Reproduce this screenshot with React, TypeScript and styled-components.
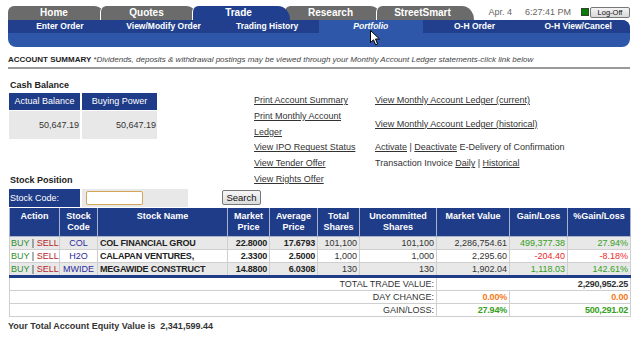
import React from "react";
import styled, { createGlobalStyle } from "styled-components";

const GlobalStyle = createGlobalStyle`
  html, body { margin: 0; padding: 0; background: #fff; }
  body { font-family: "Liberation Sans", Arial, sans-serif; color: #333; }
  * { box-sizing: border-box; }
`;

const NAVY = "#1f3c88";
const CELL_GRAY = "#e8e8e8";

const Page = styled.div`
  width: 640px;
  padding: 6px 10px 0 8px;
`;

const TopBar = styled.div`
  display: flex;
  align-items: flex-end;
  height: 14px;
`;

const Tabs = styled.div`
  display: flex;
  align-items: flex-end;
`;

const Tab = styled.div<{ $active?: boolean }>`
  position: relative;
  z-index: ${(p) => (p.$active ? 2 : 1)};
  width: 98px;
  height: 14px;
  margin-left: -6px;
  padding-right: 6px;
  border-left: 1px solid #fff;
  border-radius: 6px 12px 0 0 / 6px 14px 0 0;
  background: ${(p) => (p.$active ? "#203f8e" : "#6b6b6b")};
  color: #fff;
  font-weight: bold;
  font-size: 10px;
  line-height: 14px;
  text-align: center;
  &:first-child {
    margin-left: 0;
    border-left: 0;
  }
`;

const Clock = styled.div`
  margin-left: auto;
  display: flex;
  align-items: center;
  height: 14px;
  font-size: 9px;
  color: #666;
  padding-bottom: 2px;
`;

const ClockText = styled.span<{ $gap: number }>`
  margin-right: ${(p) => p.$gap}px;
`;

const StatusLight = styled.span`
  display: inline-block;
  width: 8px;
  height: 8px;
  background: #0b7a0b;
  border: 1px solid #2a4a2a;
  margin-right: 1px;
`;

const LogOff = styled.button`
  width: 40px;
  height: 11px;
  padding: 0;
  font-family: "Liberation Sans", Arial, sans-serif;
  font-size: 7.5px;
  line-height: 9px;
  color: #111;
  background: linear-gradient(#f4f4f4, #d8d8d8);
  border: 1px solid #777;
  border-radius: 2px;
`;

const SubNav = styled.div`
  position: relative;
  background: #2f57a9;
  border-radius: 0 8px 8px 8px;
  overflow: hidden;
  height: 27px;
`;

const SubRow = styled.div`
  display: grid;
  grid-template-columns: repeat(6, 1fr);
  height: 13px;
`;

const SubItem = styled.div<{ $active?: boolean }>`
  background: ${(p) => (p.$active ? "#2f57a9" : "#213f8d")};
  color: #fff;
  font-size: 8.5px;
  font-weight: bold;
  font-style: ${(p) => (p.$active ? "italic" : "normal")};
  line-height: 13px;
  text-align: center;
`;

const Cursor = styled.svg`
  position: absolute;
  left: 362px;
  top: 10px;
`;

const SummaryLine = styled.div`
  margin-top: 5px;
  line-height: 10px;
  height: 10px;
  white-space: nowrap;
`;

const SummaryTitle = styled.span`
  font-size: 8px;
  font-weight: bold;
  color: #222;
`;

const SummaryNote = styled.span`
  font-size: 8px;
  font-style: italic;
  color: #444;
`;

const Rule = styled.div`
  margin-top: 5px;
  height: 2px;
  background: #9a9a9a;
`;

const Middle = styled.div`
  display: grid;
  grid-template-columns: 246px 1fr;
`;

const LeftCol = styled.div`
  padding-left: 1px;
`;

const SectionTitle = styled.div<{ $top: number }>`
  margin-top: ${(p) => p.$top}px;
  margin-left: 1px;
  font-size: 9px;
  font-weight: bold;
  line-height: 12px;
  color: #222;
`;

const BalanceGrid = styled.div`
  margin-top: 2px;
  display: grid;
  grid-template-columns: 71px 75px;
  grid-template-rows: 17px 28px;
  column-gap: 2px;
  row-gap: 1px;
`;

const HeadCell = styled.div`
  background: ${NAVY};
  color: #fff;
  font-size: 9px;
  line-height: 17px;
  text-align: center;
`;

const ValueCell = styled.div`
  background: ${CELL_GRAY};
  font-size: 9px;
  line-height: 28px;
  text-align: right;
  padding-right: 1px;
  color: #333;
`;

const LinksGrid = styled.div`
  padding-top: 24px;
  display: grid;
  grid-template-columns: 121px auto;
  grid-template-rows: 15.8px 31.6px 15.8px 15.8px 15.8px;
  align-items: center;
  font-size: 9px;
  line-height: 15.8px;
  color: #333;
  white-space: nowrap;
`;

const Link = styled.a`
  color: #333;
  text-decoration: underline;
  cursor: pointer;
`;

const StockRow = styled.div`
  margin-top: 1px;
  display: flex;
  align-items: center;
  height: 18px;
  padding-left: 1px;
`;

const StockLabel = styled.div`
  width: 71px;
  height: 18px;
  background: ${NAVY};
  color: #fff;
  font-size: 9px;
  line-height: 18px;
  padding-left: 1px;
`;

const InputCell = styled.div`
  margin-left: 2px;
  width: 106px;
  height: 18px;
  background: ${CELL_GRAY};
  padding: 2px 4px;
`;

const CodeInput = styled.input`
  display: block;
  width: 57px;
  height: 14px;
  border: 1px solid #d2a65a;
  border-radius: 2px;
  background: #fff;
  outline: none;
`;

const SearchButton = styled.button`
  margin-left: 34px;
  width: 39px;
  height: 15px;
  padding: 0;
  font-family: "Liberation Sans", Arial, sans-serif;
  font-size: 9.5px;
  line-height: 13px;
  color: #111;
  background: linear-gradient(#f6f6f6, #dcdcdc);
  border: 1px solid #777;
  border-radius: 2px;
`;

const Table = styled.table`
  margin-top: 1px;
  margin-left: 1px;
  width: 621px;
  border-collapse: collapse;
  table-layout: fixed;
  font-size: 9px;
`;

const Th = styled.th`
  background: ${NAVY};
  color: #fff;
  font-weight: bold;
  font-size: 9px;
  line-height: 11px;
  height: 29px;
  padding: 3px 1px 0;
  vertical-align: top;
  text-align: center;
  border: 1px solid #a9b3cf;
  border-top: 0;
`;

const Tr = styled.tr<{ $shade?: boolean }>`
  background: ${(p) => (p.$shade ? CELL_GRAY : "#fff")};
`;

const Td = styled.td<{
  $align?: "left" | "right" | "center";
  $bold?: boolean;
  $color?: string;
  $sep?: boolean;
  $tight?: boolean;
}>`
  height: 13px;
  padding: ${(p) => (p.$tight ? "0 0 0 1px" : "0 2px")};
  line-height: 12px;
  white-space: nowrap;
  overflow: hidden;
  text-align: ${(p) => p.$align || "right"};
  font-weight: ${(p) => (p.$bold ? "bold" : "normal")};
  color: ${(p) => p.$color || "#333"};
  border: 1px solid #cfcfcf;
  border-top: ${(p) => (p.$sep ? `3px solid ${NAVY}` : "1px solid #cfcfcf")};
  letter-spacing: ${(p) => (p.$bold ? "-0.2px" : "0")};
`;

const Buy = styled.span`
  color: #2d8f2d;
`;
const Sell = styled.span`
  color: #b8262a;
`;

const Equity = styled.div`
  margin-top: 3px;
  font-size: 9px;
  font-weight: bold;
  line-height: 12px;
  color: #333;
  white-space: pre;
`;

const GREEN = "#35a021";
const RED = "#f0282a";
const ORANGE = "#f57a22";

const rows = [
  { code: "COL", name: "COL FINANCIAL GROU", mp: "22.8000", ap: "17.6793", ts: "101,100", us: "101,100", mv: "2,286,754.61", gl: "499,377.38", pgl: "27.94%", up: true },
  { code: "H2O", name: "CALAPAN VENTURES,", mp: "2.3300", ap: "2.5000", ts: "1,000", us: "1,000", mv: "2,295.60", gl: "-204.40", pgl: "-8.18%", up: false },
  { code: "MWIDE", name: "MEGAWIDE CONSTRUCT", mp: "14.8800", ap: "6.0308", ts: "130", us: "130", mv: "1,902.04", gl: "1,118.03", pgl: "142.61%", up: true },
];

const widths = [50, 38, 130, 42, 48, 42, 77, 73, 58, 63];

export default function App() {
  return (
    <Page>
      <GlobalStyle />
      <TopBar>
        <Tabs>
          <Tab>Home</Tab>
          <Tab>Quotes</Tab>
          <Tab $active>Trade</Tab>
          <Tab>Research</Tab>
          <Tab>StreetSmart</Tab>
        </Tabs>
        <Clock>
          <ClockText $gap={13}>Apr. 4</ClockText>
          <ClockText $gap={10}>6:27:41 PM</ClockText>
          <StatusLight />
          <LogOff>Log-Off</LogOff>
        </Clock>
      </TopBar>
      <SubNav>
        <SubRow>
          <SubItem>Enter Order</SubItem>
          <SubItem>View/Modify Order</SubItem>
          <SubItem>Trading History</SubItem>
          <SubItem $active>Portfolio</SubItem>
          <SubItem>O-H Order</SubItem>
          <SubItem>O-H View/Cancel</SubItem>
        </SubRow>
        <Cursor width="11" height="16" viewBox="0 0 11 16">
          <path d="M0.5 0.5 L0.5 12.5 L3.5 9.8 L5.6 14.8 L7.6 14 L5.5 9 L9.5 9 Z" fill="#fff" stroke="#000" strokeWidth="1" strokeLinejoin="round" />
        </Cursor>
      </SubNav>

      <SummaryLine>
        <SummaryTitle>ACCOUNT SUMMARY </SummaryTitle>
        <SummaryNote>
          *Dividends, deposits &amp; withdrawal postings may be viewed through your Monthly Account Ledger statements-click link below
        </SummaryNote>
      </SummaryLine>
      <Rule />

      <Middle>
        <LeftCol>
          <SectionTitle $top={10}>Cash Balance</SectionTitle>
          <BalanceGrid>
            <HeadCell>Actual Balance</HeadCell>
            <HeadCell>Buying Power</HeadCell>
            <ValueCell>50,647.19</ValueCell>
            <ValueCell>50,647.19</ValueCell>
          </BalanceGrid>
          <SectionTitle $top={35}>Stock Position</SectionTitle>
        </LeftCol>
        <LinksGrid>
          <div><Link>Print Account Summary</Link></div>
          <div><Link>View Monthly Account Ledger (current)</Link></div>
          <div>
            <Link>Print Monthly Account</Link>
            <br />
            <Link>Ledger</Link>
          </div>
          <div><Link>View Monthly Account Ledger (historical)</Link></div>
          <div><Link>View IPO Request Status</Link></div>
          <div>
            <Link>Activate</Link> | <Link>Deactivate</Link> E-Delivery of Confirmation
          </div>
          <div><Link>View Tender Offer</Link></div>
          <div>
            Transaction Invoice <Link>Daily</Link> | <Link>Historical</Link>
          </div>
          <div><Link>View Rights Offer</Link></div>
          <div />
        </LinksGrid>
      </Middle>

      <StockRow>
        <StockLabel>Stock Code:</StockLabel>
        <InputCell>
          <CodeInput type="text" />
        </InputCell>
        <SearchButton>Search</SearchButton>
      </StockRow>

      <Table>
        <colgroup>
          {widths.map((w, i) => (
            <col key={i} style={{ width: w }} />
          ))}
        </colgroup>
        <thead>
          <tr>
            <Th>Action</Th>
            <Th>Stock<br />Code</Th>
            <Th>Stock Name</Th>
            <Th>Market<br />Price</Th>
            <Th>Average<br />Price</Th>
            <Th>Total<br />Shares</Th>
            <Th>Uncommitted<br />Shares</Th>
            <Th>Market Value</Th>
            <Th>Gain/Loss</Th>
            <Th>%Gain/Loss</Th>
          </tr>
        </thead>
        <tbody>
          {rows.map((r, i) => (
            <Tr key={r.code} $shade={i % 2 === 0}>
              <Td $align="left" $tight>
                <Buy>BUY</Buy> | <Sell>SELL</Sell>
              </Td>
              <Td $align="center" $color="#2b2b9e">{r.code}</Td>
              <Td $align="left" $bold $color="#222">{r.name}</Td>
              <Td $bold $color="#222">{r.mp}</Td>
              <Td $bold $color="#222">{r.ap}</Td>
              <Td>{r.ts}</Td>
              <Td>{r.us}</Td>
              <Td>{r.mv}</Td>
              <Td $color={r.up ? GREEN : RED}>{r.gl}</Td>
              <Td $color={r.up ? GREEN : RED}>{r.pgl}</Td>
            </Tr>
          ))}
          <Tr>
            <Td colSpan={7} $sep>TOTAL TRADE VALUE:</Td>
            <Td colSpan={3} $sep $bold>2,290,952.25</Td>
          </Tr>
          <Tr>
            <Td colSpan={7}>DAY CHANGE:</Td>
            <Td $bold $color={ORANGE}>0.00%</Td>
            <Td colSpan={2} $bold $color={ORANGE}>0.00</Td>
          </Tr>
          <Tr>
            <Td colSpan={7}>GAIN/LOSS:</Td>
            <Td $bold $color={GREEN}>27.94%</Td>
            <Td colSpan={2} $bold $color={GREEN}>500,291.02</Td>
          </Tr>
        </tbody>
      </Table>

      <Equity>Your Total Account Equity Value is  2,341,599.44</Equity>
    </Page>
  );
}
